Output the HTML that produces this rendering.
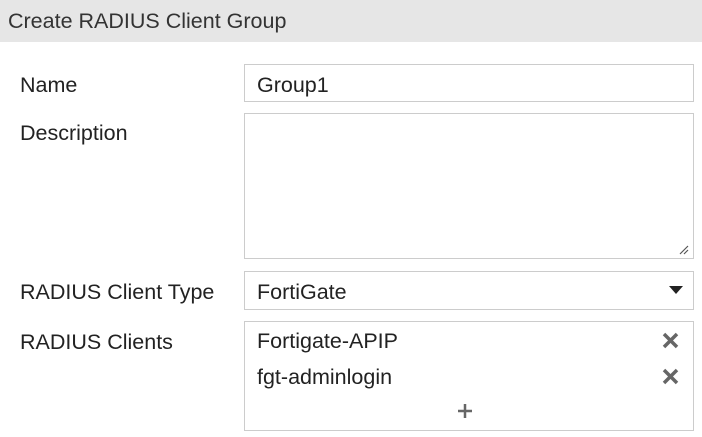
<!DOCTYPE html><html><head><style>
body{margin:0;width:702px;height:437px;background:#fff;font-family:"Liberation Sans",sans-serif;color:#222;position:relative;overflow:hidden}
.a{position:absolute}
.t{font-size:21.5px;line-height:24px;white-space:nowrap}
.box{position:absolute;border:1px solid #ccc;box-sizing:border-box;background:#fff}
</style></head><body>
<div class="a" style="left:0;top:0;width:702px;height:42px;background:#e6e6e6"></div>
<div class="a t" style="left:8px;top:9px;color:#333">Create RADIUS Client Group</div>
<div class="a t" style="left:20px;top:73px">Name</div>
<div class="box" style="left:244px;top:64px;width:450px;height:38px"></div>
<div class="a t" style="left:257px;top:73px">Group1</div>
<div class="a t" style="left:20px;top:121px">Description</div>
<div class="box" style="left:244px;top:113px;width:450px;height:146px"></div>
<svg class="a" style="left:678px;top:244px" width="12" height="12"><path d="M2 10L10 2M6 10L10 6" stroke="#555" stroke-width="1.2"/></svg>
<div class="a t" style="left:20px;top:280px">RADIUS Client Type</div>
<div class="box" style="left:244px;top:271px;width:450px;height:39px"></div>
<div class="a t" style="left:257px;top:280px">FortiGate</div>
<svg class="a" style="left:669px;top:286px" width="14" height="9"><path d="M0 0H14L7 8Z" fill="#222"/></svg>
<div class="a t" style="left:20px;top:330px">RADIUS Clients</div>
<div class="box" style="left:244px;top:321px;width:450px;height:110px"></div>
<div class="a t" style="left:257px;top:329px">Fortigate-APIP</div>
<div class="a t" style="left:257px;top:365px">fgt-adminlogin</div>
<svg class="a" style="left:662px;top:332px" width="17" height="17"><path d="M2 2L15 15M15 2L2 15" stroke="#666" stroke-width="3.5"/></svg>
<svg class="a" style="left:662px;top:368px" width="17" height="17"><path d="M2 2L15 15M15 2L2 15" stroke="#666" stroke-width="3.5"/></svg>
<svg class="a" style="left:457px;top:403px" width="16" height="16"><path d="M8 1V15M1 8H15" stroke="#666" stroke-width="2.5"/></svg>
</body></html>
